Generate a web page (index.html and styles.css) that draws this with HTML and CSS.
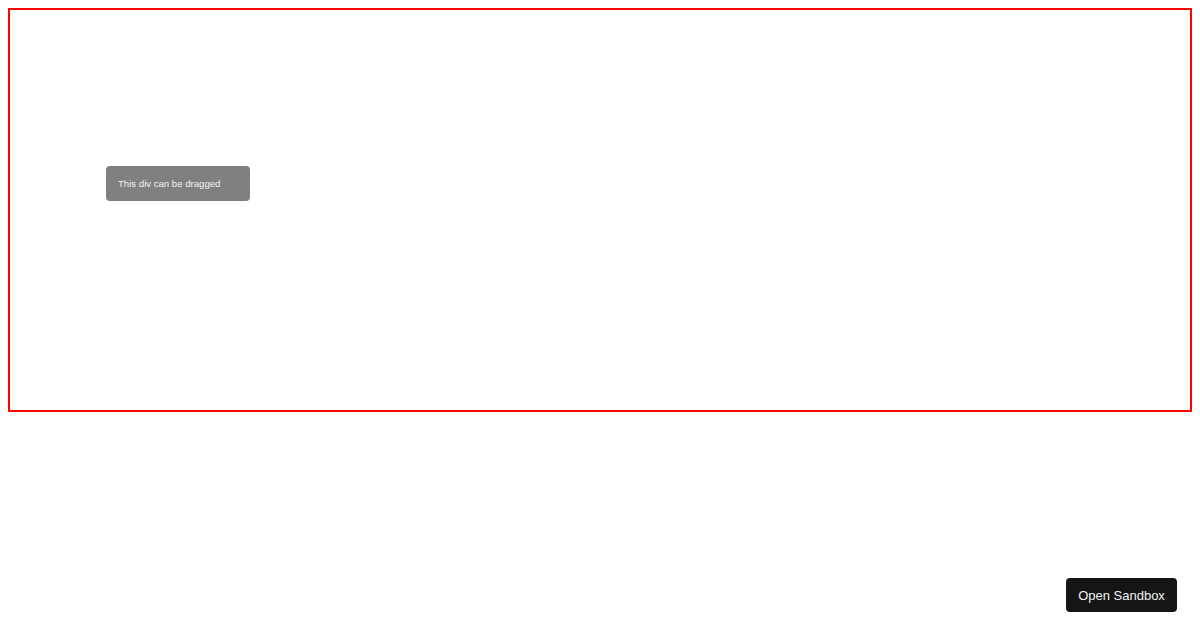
FILE: index.html
```html
<!doctype html>
<html>
<head>
	<meta charset="utf-8" />
	<title>Draggable</title>
	<link rel="stylesheet" href="styles.css">
</head>
<body>
	<div class="container">
		<div class="draggable">This div can be dragged</div>
	</div>

	<a class="sandbox-btn" href="#">Open Sandbox</a>
</body>
</html>
```

FILE: styles.css
```css
*, *::before, *::after {
	box-sizing: border-box;
}

body {
	margin: 8px;
	font-family: "Liberation Sans", Arial, sans-serif;
	background: #fff;
}

.container {
	position: relative;
	height: 404px;
	border: 2px solid #f00;
}

.draggable {
	position: absolute;
	left: 96px;
	top: 156px;
	width: 144px;
	height: 35px;
	padding: 0 12px;
	display: flex;
	align-items: center;
	background: #808080;
	color: #f4f4f4;
	font-size: 9.6px;
	border-radius: 4px;
	cursor: move;
}

.sandbox-btn {
	position: fixed;
	right: 23px;
	bottom: 18px;
	width: 111px;
	height: 34px;
	display: flex;
	align-items: center;
	justify-content: center;
	background: #151515;
	color: #f2f2f2;
	font-size: 13px;
	text-decoration: none;
	border-radius: 4px;
}
```
